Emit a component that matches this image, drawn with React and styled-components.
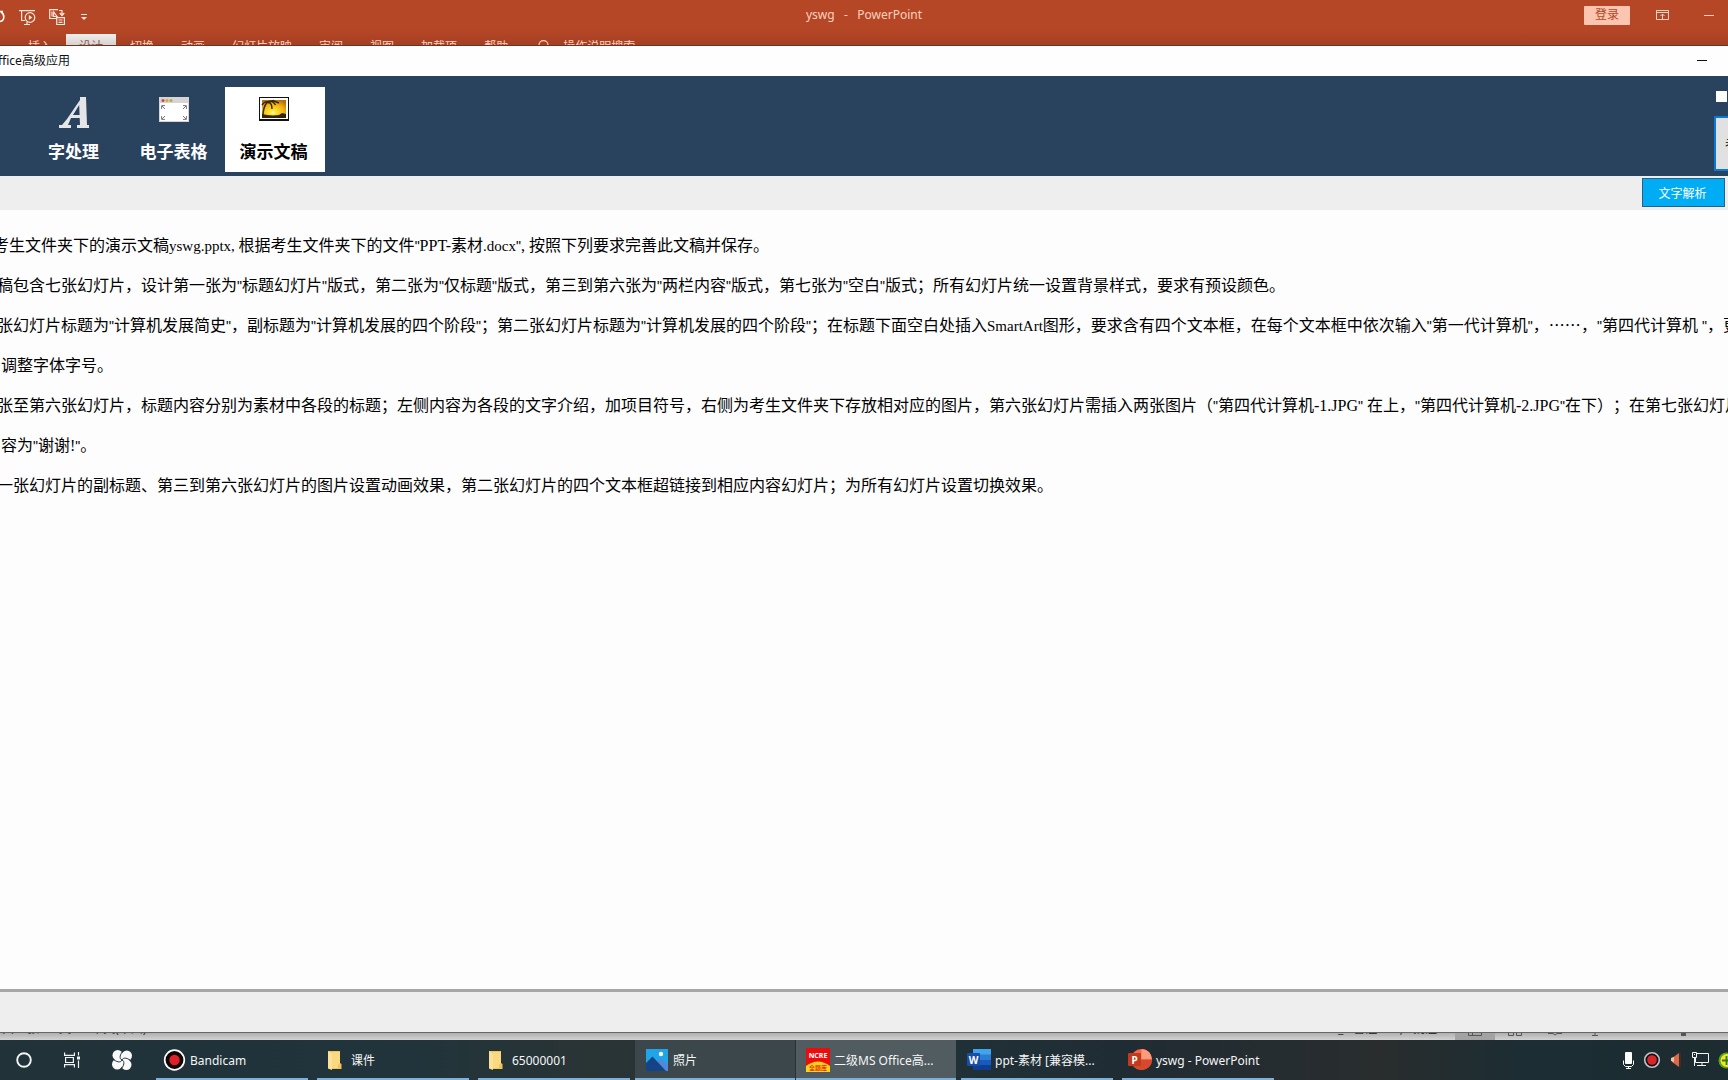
import React from 'react';
import styled, { createGlobalStyle, css } from 'styled-components';

const ui = '"Noto Sans", "Noto Sans CJK SC", sans-serif';

const GlobalStyle = createGlobalStyle`
  *, *::before, *::after { box-sizing: border-box; }
  body { margin: 0; font-family: ${ui}; font-size: 12px; text-spacing-trim: space-all; }
  button { font: inherit; color: inherit; margin: 0; padding: 0; border: 0; background: none; border-radius: 0; }
  svg { display: block; flex: none; }
`;

const Desktop = styled.div`
  display: flex;
  flex-direction: column;
  min-height: 100vh;
  overflow: hidden;
`;

/* PowerPoint window behind the exam window */
const PptHeader = styled.header`
  height: 46px;
  flex: none;
  overflow: hidden;
  color: #ffd0be;
  background: linear-gradient(#b54727 0 30px, #a64022 44px);
  border-bottom: 1px solid #6b3325;
`;

const PptTitleBar = styled.div`
  display: grid;
  grid-template-columns: 1fr auto 1fr;
  align-items: start;
  height: 34px;
`;

const QuickTools = styled.div`
  display: flex;
  gap: 13px;
  padding-top: 8px;
`;

const ToolButton = styled.button`
  display: block;
  flex: none;
  height: 18px;
`;

const PptTitle = styled.div`
  line-height: 16px;
  padding-top: 7px;
  white-space: pre;
`;

const WindowTools = styled.div`
  display: flex;
  justify-content: flex-end;
  align-items: center;
  height: 30px;
  padding-right: 14px;
`;

const LoginButton = styled.button`
  width: 46px;
  height: 19px;
  margin-right: 26px;
  line-height: 18px;
  color: #b54727;
  background: #fbc5b0;
  border-radius: 1px;
`;

const CaptionButton = styled.button`
  margin-left: ${(p) => p.$gap || 0}px;
`;

const Ribbon = styled.nav`
  display: flex;
  gap: 1px;
  padding-left: 15px;
`;

const RibbonTab = styled.button`
  flex: none;
  height: 26px;
  padding: 0 13px;
  line-height: 26px;
  ${(p) => p.$active && css`color: #8d5646; background: linear-gradient(#f1efee, #d8d4d2 10px);`}
`;

const RibbonSearch = styled(RibbonTab)`
  display: flex;
  align-items: center;
  gap: 14px;
  padding-left: 16px;
`;

/* Exam window */
const ExamTitleBar = styled.div`
  display: flex;
  justify-content: space-between;
  align-items: center;
  height: 30px;
  flex: none;
  padding: 0 21px 2px 0;
  background: #fefefe;
  color: #111;
`;

const ExamTitle = styled.div`
  margin-left: -2px;
  white-space: nowrap;
`;

const Banner = styled.div`
  display: flex;
  justify-content: space-between;
  flex: none;
  height: 100px;
  overflow: hidden;
  background: #29435f;
`;

const Subjects = styled.nav`
  display: flex;
  padding: 11px 0 0 25px;
`;

const SubjectTab = styled.button`
  display: flex;
  flex-direction: column;
  align-items: center;
  width: 100px;
  height: 85px;
  padding: 10px 3px 0 0;
  font-family: "Noto Sans CJK SC", sans-serif;
  font-size: 17px;
  font-weight: 700;
  line-height: 24px;
  color: ${(p) => (p.$active ? '#000' : '#fff')};
  background: ${(p) => (p.$active ? '#fff' : 'none')};
`;

const SubjectIcon = styled.span`
  display: block;
  height: 42px;
`;

const BannerSide = styled.div`
  width: 14px;
  flex: none;
  overflow: hidden;
`;

const Tick = styled.input`
  display: block;
  appearance: none;
  width: 11px;
  height: 11px;
  margin: 15px 0 14px 2px;
  background: #fff;
`;

const SideButton = styled.button`
  display: block;
  width: 72px;
  height: 55px;
  padding-left: 9px;
  text-align: left;
  border: 2px solid #0a78d6;
  background: #e1e1e1;
  color: #000;
`;

const SubBar = styled.div`
  display: flex;
  justify-content: flex-end;
  flex: none;
  height: 34px;
  padding: 2px 3px;
  background: #eee;
`;

const AnalysisButton = styled.button`
  width: 83px;
  height: 29px;
  padding-right: 2px;
  border: 1px solid #2c5f80;
  background: #00adf5;
  color: #fff;
`;

const Paper = styled.main`
  flex: 1;
  padding-top: 16px;
  overflow: hidden;
  background: #fdfdfd;
  color: #000;
  font-family: "Liberation Serif", "Noto Sans CJK SC", serif;
  font-size: 16px;
  line-height: 40px;
  white-space: nowrap;
`;

const Paragraph = styled.p`
  margin: 0 0 0 ${(p) => (p.$lead ? -7 : -3)}px;
`;

const NextLine = styled.span`
  display: block;
  padding-left: 4px;
`;

const Latin = styled.span`
  font-size: 15px;
  line-height: 1;
`;

const Quote = styled.span`
  font-family: "Liberation Sans", sans-serif;
  font-size: 14px;
  line-height: 1;
`;

const Ellipsis = styled.span`
  font-family: "Noto Sans CJK SC", sans-serif;
  line-height: 1;
`;

const ExamFooter = styled.div`
  flex: none;
  height: 44px;
  border-top: 3px solid #a6a6a6;
  border-bottom: 1px solid #666;
  background: #eee;
`;

const PptStatus = styled.div`
  display: flex;
  justify-content: space-between;
  align-items: flex-end;
  flex: none;
  height: 7px;
  overflow: hidden;
  color: #333;
  background: linear-gradient(#b0b0b0, #d2d2d2);
`;

const StatusGroup = styled.div`
  display: flex;
  align-items: flex-end;
  gap: ${(p) => p.$gap}px;
  padding: ${(p) => p.$pad};
`;

const StatusText = styled.span`
  line-height: 16px;
  padding-bottom: 3px;
  white-space: pre;
`;

const ViewButton = styled.button`
  display: flex;
  justify-content: center;
  width: 40px;
  height: 7px;
  background: ${(p) => (p.$active ? '#a3a3a3' : 'none')};
`;

const Taskbar = styled.footer`
  display: flex;
  flex: none;
  height: 40px;
  overflow: hidden;
  color: #f4f6f7;
  background: linear-gradient(90deg, #213239 0, #21343b 24%, #293435 34%, #21333a 50%, #202c33 65%, #292d2e 80%, #1c2d33 88%, #1c2c31 100%);
`;

const SystemButtons = styled.div`
  display: flex;
  align-items: center;
  gap: 32px;
  width: 152px;
  flex: none;
  padding-left: 16px;
`;

const Apps = styled.div`
  display: flex;
  gap: 1px;
  flex: 1;
`;

const TaskButton = styled.button`
  display: flex;
  align-items: center;
  gap: 4px;
  width: 160px;
  padding: 0 10px;
  text-align: left;
  white-space: nowrap;
  background:
    linear-gradient(#7db1da, #7db1da) bottom / ${(p) => (p.$state ? '100%' : '152px')} 2px no-repeat,
    ${(p) => ({ open: '#3b474a', focus: '#515c60' }[p.$state] || 'transparent')};
`;

const Tray = styled.div`
  display: flex;
  align-items: center;
  gap: 9px;
  width: 105px;
  flex: none;
`;

const Minus = ({ size = 10 }) => (
  <svg width={size} height="10" viewBox={`0 0 ${size} 10`}><path d={`M0 5.5H${size}`} stroke="currentColor" /></svg>
);

const RedoIcon = () => (
  <svg width="6" height="18" viewBox="0 0 6 18" fill="none" stroke="#fff" strokeWidth="1.6">
    <path d="M0 3.5H3M0 13.5C5 13 4.800 6 1 4" />
  </svg>
);
const ShowIcon = () => (
  <svg width="17" height="18" viewBox="0 0 17 18" fill="none" stroke="#ffe6dc" strokeWidth="1.200">
    <path d="M0 2.600H16M2.600 3V12.500H6M5 16.500H11M8 14V16" />
    <circle cx="11" cy="9.500" r="4.800" />
    <path d="M9.800 7L13.300 9.500 9.800 12Z" fill="#ffe6dc" stroke="none" />
  </svg>
);
const TouchIcon = () => (
  <svg width="17" height="18" viewBox="0 0 17 18" fill="none" stroke="#ffe6dc" strokeWidth="1.200">
    <path d="M7 10.500H.7V1.600H9M3 3.500V8.500M4.800 4L8 8.500H4.500Z" />
    <path d="M10 2.500H13V7M10.800 5L13 7.500 15.300 5M7.700 9.600H15.400V16.500H7.700ZM9.500 12H13.500M9.500 14.300H13.500" />
  </svg>
);
const CaretIcon = () => (
  <svg width="9" height="18" viewBox="0 0 9 18"><path d="M2 6.500H8" stroke="#ffe6dc" /><path d="M2 9H8L5 12Z" fill="#ffe6dc" /></svg>
);
const RibbonToggleIcon = () => (
  <svg width="13" height="11" viewBox="0 0 13 11" fill="none" stroke="currentColor">
    <path d="M.5.5H12.500V9.500H.5ZM.5 2.500H12.500M6.500 9V4M4.500 6L6.500 4 8.500 6" />
  </svg>
);
const BulbIcon = () => (
  <svg width="11" height="14" viewBox="0 0 11 14" fill="none" stroke="currentColor" strokeWidth="1.200">
    <path d="M3.500 10C3.500 8 1 7.500 1 5A4.500 4.300 0 0 1 10 5C10 7.500 7.500 8 7.500 10ZM4 13H7" />
  </svg>
);

const LetterIcon = () => (
  <svg width="32" height="32" viewBox="0 0 32 32">
    <path fill="#e4e5e7" fillRule="evenodd" d="M22 0H28L29 28H31V31H19V28H22L21.700 21H13L10 28H13V31H1V28H4L9 22 22 3ZM15 18H21.600L21.200 8Z" />
  </svg>
);
const SheetIcon = () => (
  <svg width="30" height="25" viewBox="0 0 30 25">
    <rect width="30" height="25" fill="#d5d5d5" />
    <rect x="1" y="6" width="28" height="18" fill="#fff" />
    <circle cx="4" cy="3.500" r="1.500" fill="#d0473e" /><circle cx="8" cy="3.500" r="1.500" fill="#dfa334" /><circle cx="12" cy="3.500" r="1.500" fill="#b5ae3a" />
    <path fill="none" stroke="#777" d="M2.600 12V8.600H6M3 9L6 12M24 8.600H27.400V12M27 9L24 12M2.600 19V22.400H6M3 22L6 19M24 22.400H27.400V19M27 22L24 19" />
  </svg>
);
const SunsetIcon = () => (
  <svg width="30" height="24" viewBox="0 0 30 24">
    <defs>
      <radialGradient id="sunset" cx=".45" cy=".7" r=".75">
        <stop offset="0" stopColor="#fffbc0" /><stop offset=".18" stopColor="#ffe52e" /><stop offset=".65" stopColor="#eeb10e" /><stop offset="1" stopColor="#b9700a" />
      </radialGradient>
    </defs>
    <rect width="30" height="24" fill="#111" /><rect x="1" y="1" width="28" height="21" fill="#fff" />
    <rect x="3" y="3" width="24" height="18" fill="url(#sunset)" />
    <path fill="#33240a" d="M3 17L8 18 14 18.500 20 18 23 16 27 17V21H3Z" />
    <path fill="none" stroke="#33240a" strokeWidth="1.400" d="M4 19C4 14 5 9 8 5.500M3 8C5 5 7 4 9 5.500M8 5C12 3 15 5 16.500 8M8 5.500C12 5 13 8 13 12M8 5L15 3.500M15 4L20 6" />
  </svg>
);

const CortanaIcon = () => (
  <svg width="16" height="16" viewBox="0 0 16 16"><circle cx="8" cy="8" r="6.800" fill="none" stroke="#f2f4f5" strokeWidth="1.900" /></svg>
);
const TaskViewIcon = () => (
  <svg width="16" height="16" viewBox="0 0 16 16" fill="none" stroke="#f2f4f5" strokeWidth="1.200">
    <path d="M.6.5V3.400H10.400V.5M.6 15.500V12.600H10.400V15.500M1.600 5.500H9.400V10.500H1.600ZM14.500 0V3.500M14.500 8.500V16" />
    <rect x="13" y="4.500" width="3" height="3" fill="#f2f4f5" stroke="none" />
  </svg>
);
const PinwheelIcon = () => (
  <svg width="20" height="20" viewBox="0 0 20 20">
    <g fill="#f8f9fa"><circle cx="5.700" cy="5.200" r="5.200" /><circle cx="14.800" cy="5.700" r="5.200" /><circle cx="14.300" cy="14.800" r="5.200" /><circle cx="5.200" cy="14.300" r="5.200" /><circle cx="10" cy="10" r="4" /></g>
    <path fill="none" stroke="#213239" d="M10 10C7 9 7.500 4 12 0M10 10C11 7 16 7.500 20 12M10 10C13 11 12.500 16 8 20M10 10C9 13 4 12.500 0 8" />
  </svg>
);
const BandicamIcon = () => (
  <svg width="24" height="24" viewBox="0 0 24 24"><circle cx="12.500" cy="12" r="9.800" fill="#100506" stroke="#fff" strokeWidth="1.700" /><circle cx="12.500" cy="12" r="5.200" fill="#e0212b" /></svg>
);
const FolderIcon = () => (
  <svg width="24" height="24" viewBox="0 0 24 24"><path fill="#eec45b" d="M5 3H17V15L18.500 16V21H6Z" /><path fill="#fce196" d="M5 3L9 5V22L5 20.500Z" /><path fill="#fad981" d="M9 4H17V15L15 17V20H9Z" /></svg>
);
const PhotosIcon = () => (
  <svg width="24" height="24" viewBox="0 0 24 24"><rect x="1" y="1" width="22" height="22" fill="#20a6e8" /><path fill="#5387d8" d="M10 15L16 10.500 23 17V23H10Z" /><path fill="#154387" d="M1 15L7.500 8.500 21 23H1Z" /><circle cx="16" cy="6" r="2.200" fill="#fff" /></svg>
);
const NcreIcon = () => (
  <svg width="24" height="24" viewBox="0 0 24 24">
    <rect width="24" height="24" fill="#ec0c0c" />
    <path fill="#ffd21a" d="M0 24V18Q12 9 24 18V24Z" />
    <text x="12" y="10" textAnchor="middle" fontFamily="Noto Sans" fontWeight="700" fontSize="7" fill="#fff">NCRE</text>
    <text x="12" y="22" textAnchor="middle" fontFamily="Noto Sans CJK SC" fontWeight="700" fontSize="6" fill="#df3510">全题库</text>
  </svg>
);
const WordIcon = () => (
  <svg width="24" height="24" viewBox="0 0 24 24">
    <path fill="#41a5ee" d="M6 1H24V7H6Z" /><path fill="#2b7cd3" d="M6 6.500H24V12H6Z" /><path fill="#185abd" d="M6 12H24V17H6Z" /><path fill="#103f91" d="M6 17H24V22H6Z" />
    <rect y="5" width="13" height="13" rx="1" fill="#174ea8" />
    <text x="6.500" y="15.500" textAnchor="middle" fontFamily="Noto Sans" fontWeight="700" fontSize="10" fill="#fff">W</text>
  </svg>
);
const PowerPointIcon = () => (
  <svg width="24" height="24" viewBox="0 0 24 24">
    <circle cx="13.500" cy="11.500" r="10.500" fill="#ee6c4b" /><path fill="#ff9a7d" d="M13.500 1A10.500 10.500 0 0 1 24 11.500H13.500Z" /><path fill="#d6492d" d="M3 11.500H24A10.500 10.500 0 0 1 3 11.500Z" />
    <rect y="5" width="13" height="13" rx="1" fill="#c2391c" />
    <text x="6.500" y="15.500" textAnchor="middle" fontFamily="Noto Sans" fontWeight="700" fontSize="10" fill="#fff">P</text>
  </svg>
);
const MicIcon = () => (
  <svg width="11" height="17" viewBox="0 0 11 17"><rect x="2" width="7" height="12" rx="1" fill="#fff" /><path fill="none" stroke="#fff" d="M.5 8.500V12.500L2.500 14.500H8.500L10.500 12.500V8.500M5.500 14V16.500M3 16.500H8" /></svg>
);
const RecordIcon = () => (
  <svg width="18" height="18" viewBox="0 0 18 18"><circle cx="9" cy="9" r="7.300" fill="#1d0b0d" stroke="#bfc4cb" strokeWidth="1.600" /><circle cx="9" cy="9" r="4.800" fill="#d7262a" /></svg>
);
const SpeakerIcon = () => (
  <svg width="13" height="16" viewBox="0 0 13 16"><path fill="#d86b48" d="M2 6L9 1V15L2 10Z" /><path fill="#f4c2a5" d="M1 6L4 5V10L1 9Z" /><path stroke="#6a281c" d="M10 1V15" /></svg>
);
const NetworkIcon = () => (
  <svg width="17" height="16" viewBox="0 0 17 16" fill="none" stroke="#f2f4f5"><path d="M5 1.500H16.500V10.500H3.500V6M.5.500H4.500V5.500H.5ZM2.500 6V14M10 11V13.500M5 13.500H14M2 2.500H3" /></svg>
);
const GuardIcon = () => (
  <svg width="17" height="17" viewBox="0 0 17 17"><circle cx="8.500" cy="8.500" r="8" fill="#58a51c" /><circle cx="9" cy="8.500" r="6.500" fill="#f4e52b" /><path stroke="#2f7a14" strokeWidth="1.800" d="M4 8.500H13M8.500 4V13" /></svg>
);

/* Sets lower-case Latin runs, straight quotes and ellipses of a mixed line in their own faces */
const Mixed = ({ children }) =>
  children.split(/("|…+|[A-Za-z0-9.,!-][A-Za-z0-9.,! -]*)/).map((part, i) => {
    if (part === '"') return <Quote key={i}>{part}</Quote>;
    if (part.startsWith('…')) return <Ellipsis key={i}>{part}</Ellipsis>;
    return /[a-z]/.test(part) ? <Latin key={i}>{part}</Latin> : part;
  });

const ribbonTabs = ['插入', '设计', '切换', '动画', '幻灯片放映', '审阅', '视图', '加载项', '帮助'];

const subjects = [
  { name: '字处理', Icon: LetterIcon },
  { name: '电子表格', Icon: SheetIcon },
  { name: '演示文稿', Icon: SunsetIcon, active: true },
];

const task = [
  { text: '考生文件夹下的演示文稿yswg.pptx, 根据考生文件夹下的文件"PPT-素材.docx", 按照下列要求完善此文稿并保存。', lead: true },
  { text: '稿包含七张幻灯片，设计第一张为"标题幻灯片"版式，第二张为"仅标题"版式，第三到第六张为"两栏内容"版式，第七张为"空白"版式；所有幻灯片统一设置背景样式，要求有预设颜色。' },
  {
    text: '张幻灯片标题为"计算机发展简史"，副标题为"计算机发展的四个阶段"；第二张幻灯片标题为"计算机发展的四个阶段"；在标题下面空白处插入SmartArt图形，要求含有四个文本框，在每个文本框中依次输入"第一代计算机"，……，"第四代计算机 "，更',
    next: '调整字体字号。',
  },
  {
    text: '张至第六张幻灯片，标题内容分别为素材中各段的标题；左侧内容为各段的文字介绍，加项目符号，右侧为考生文件夹下存放相对应的图片，第六张幻灯片需插入两张图片（"第四代计算机-1.JPG" 在上，"第四代计算机-2.JPG"在下）；在第七张幻灯片',
    next: '容为"谢谢!"。',
  },
  { text: '一张幻灯片的副标题、第三到第六张幻灯片的图片设置动画效果，第二张幻灯片的四个文本框超链接到相应内容幻灯片；为所有幻灯片设置切换效果。' },
];

const apps = [
  { name: 'Bandicam', Icon: BandicamIcon },
  { name: '课件', Icon: FolderIcon },
  { name: '65000001', Icon: FolderIcon },
  { name: '照片', Icon: PhotosIcon, state: 'open' },
  { name: '二级MS Office高...', Icon: NcreIcon, state: 'focus' },
  { name: 'ppt-素材 [兼容模...', Icon: WordIcon },
  { name: 'yswg - PowerPoint', Icon: PowerPointIcon },
];

export default function App() {
  return (
    <Desktop lang="zh-CN">
      <GlobalStyle />
      <PptHeader>
        <PptTitleBar>
          <QuickTools>
            <ToolButton aria-label="重复"><RedoIcon /></ToolButton>
            <ToolButton aria-label="放映"><ShowIcon /></ToolButton>
            <ToolButton aria-label="触摸模式"><TouchIcon /></ToolButton>
            <ToolButton aria-label="更多"><CaretIcon /></ToolButton>
          </QuickTools>
          <PptTitle>{'yswg   -   PowerPoint'}</PptTitle>
          <WindowTools>
            <LoginButton>登录</LoginButton>
            <CaptionButton aria-label="功能区选项"><RibbonToggleIcon /></CaptionButton>
            <CaptionButton $gap={35} aria-label="最小化"><Minus /></CaptionButton>
          </WindowTools>
        </PptTitleBar>
        <Ribbon>
          {ribbonTabs.map((t) => <RibbonTab key={t} $active={t === '设计'}>{t}</RibbonTab>)}
          <RibbonSearch><BulbIcon />操作说明搜索</RibbonSearch>
        </Ribbon>
      </PptHeader>

      <ExamTitleBar>
        <ExamTitle>ffice高级应用</ExamTitle>
        <CaptionButton aria-label="最小化"><Minus /></CaptionButton>
      </ExamTitleBar>
      <Banner>
        <Subjects>
          {subjects.map(({ name, Icon, active }) => (
            <SubjectTab key={name} $active={active}>
              <SubjectIcon><Icon /></SubjectIcon>
              {name}
            </SubjectTab>
          ))}
        </Subjects>
        <BannerSide>
          <Tick type="checkbox" aria-label="选项" />
          <SideButton>考</SideButton>
        </BannerSide>
      </Banner>
      <SubBar><AnalysisButton>文字解析</AnalysisButton></SubBar>

      <Paper>
        {task.map(({ text, next, lead }) => (
          <Paragraph key={text} $lead={lead}>
            <Mixed>{text}</Mixed>
            {next && <NextLine><Mixed>{next}</Mixed></NextLine>}
          </Paragraph>
        ))}
      </Paper>

      <ExamFooter />
      <PptStatus>
        <StatusGroup $gap={20} $pad="0 0 0 2px">
          <StatusText>共 1 张</StatusText>
          <StatusText>英</StatusText>
          <StatusText>中文(中国)</StatusText>
        </StatusGroup>
        <StatusGroup $gap={0} $pad="0 42px 0 0">
          <StatusGroup $gap={10} $pad="0 18px 0 0">
            <StatusText>_</StatusText>
            <StatusText>备注</StatusText>
            <StatusText>    ,</StatusText>
            <StatusText>批注</StatusText>
          </StatusGroup>
          <ViewButton $active aria-label="普通视图"><svg width="14" height="3" viewBox="0 0 14 3"><path d="M.5 0V2.500H13.500V0M4.500 0V2" fill="none" stroke="#555" /></svg></ViewButton>
          <ViewButton aria-label="浏览视图"><svg width="14" height="3" viewBox="0 0 14 3"><path d="M.5 0V2.500H5.500V0M8.500 0V2.500H13.500V0" fill="none" stroke="#555" /></svg></ViewButton>
          <ViewButton aria-label="阅读视图"><svg width="14" height="3" viewBox="0 0 14 3"><path d="M0 .5H5L7 2 9 .5H14" fill="none" stroke="#555" /></svg></ViewButton>
          <ViewButton aria-label="放映视图"><svg width="6" height="3" viewBox="0 0 6 3"><path d="M3 0V2.500M0 2.500H6" fill="none" stroke="#555" /></svg></ViewButton>
          <StatusGroup $gap={0} $pad="0 0 4px 66px"><svg width="5" height="3" viewBox="0 0 5 3"><rect width="5" height="3" fill="#555" /></svg></StatusGroup>
        </StatusGroup>
      </PptStatus>

      <Taskbar>
        <SystemButtons>
          <button aria-label="Cortana"><CortanaIcon /></button>
          <button aria-label="任务视图"><TaskViewIcon /></button>
          <button aria-label="浏览器"><PinwheelIcon /></button>
        </SystemButtons>
        <Apps>
          {apps.map(({ name, Icon, state }) => (
            <TaskButton key={name} $state={state}><Icon />{name}</TaskButton>
          ))}
        </Apps>
        <Tray>
          <MicIcon />
          <RecordIcon />
          <SpeakerIcon />
          <NetworkIcon />
          <GuardIcon />
        </Tray>
      </Taskbar>
    </Desktop>
  );
}
